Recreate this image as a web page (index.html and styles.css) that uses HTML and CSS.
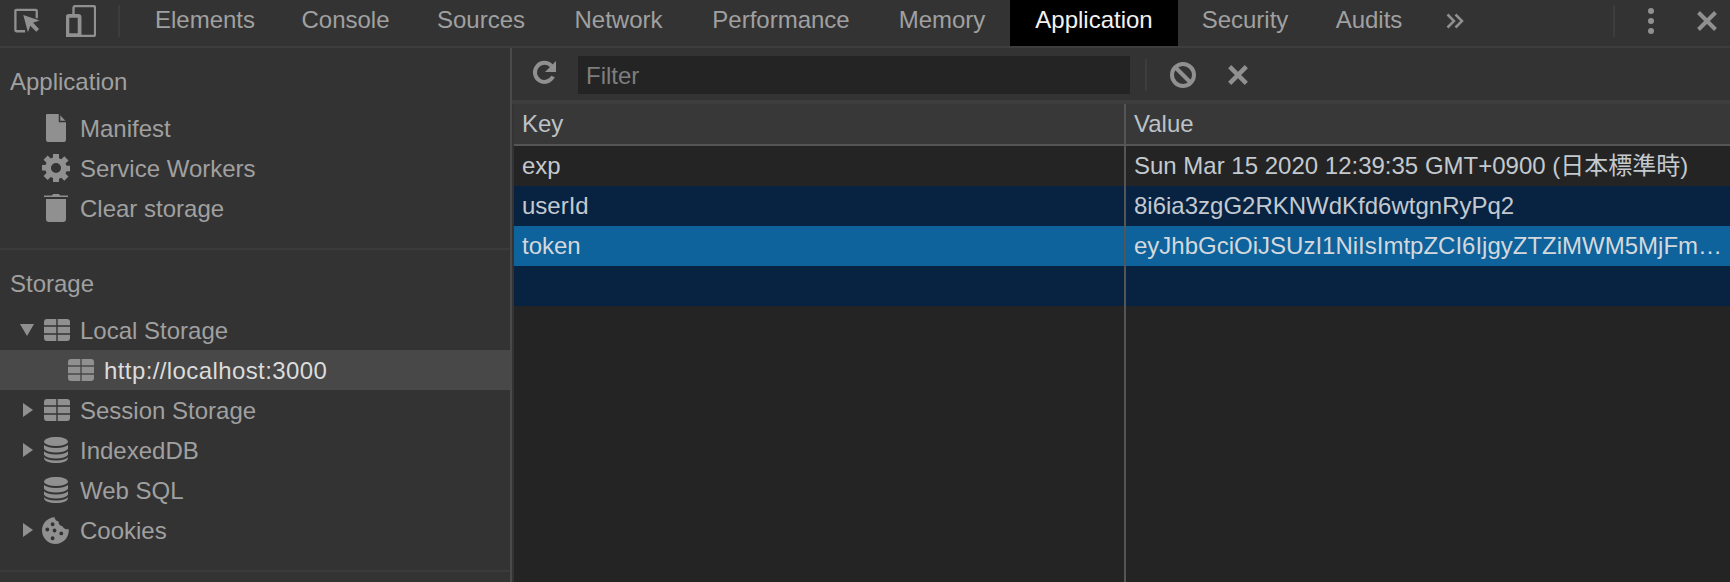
FILE: index.html
```html
<!DOCTYPE html>
<html lang="en">
<head>
<meta charset="utf-8">
<title>DevTools</title>
<link rel="stylesheet" href="styles.css">
</head>
<body>
<svg class="defs" width="0" height="0">
  <defs>
    <symbol id="grid" viewBox="0 0 26 22"><path d="M3 0h9.300v6.300H0V3a3 3 0 0 1 3-3zM13.700 0H23a3 3 0 0 1 3 3v3.300H13.700zM0 7.700h12.300v6.600H0zM13.700 7.700H26v6.600H13.700zM0 15.700h12.300V22H3a3 3 0 0 1-3-3zM13.700 15.700H26V19a3 3 0 0 1-3 3h-9.300z"/></symbol>
    <symbol id="db" viewBox="0 0 26 26"><path d="M1 5c0-3 5-5 12-5s12 2 12 5v16c0 3-5 5-12 5S1 24 1 21z"/><path class="cut" d="M0 5.500c2 3 6.500 4.500 13 4.500s11-1.500 13-4.500M0 12c2 3 6.500 4.500 13 4.500S24 15 26 12M0 18c2 3 6.500 4.500 13 4.500S24 21 26 18"/></symbol>
    <symbol id="right" viewBox="0 0 12 14"><path d="M1 0l10 7-10 7z"/></symbol>
  </defs>
</svg>
<div class="devtools">
  <header class="tabbar">
    <svg class="ic ic-inspect" viewBox="0 0 28 28"><path class="line" d="M12 25H2.500a1 1 0 0 1-1-1V3a1 1 0 0 1 1-1h21a1 1 0 0 1 1 1v8" /><path d="M10 7.500l17.500 6-7 2.500 6.500 6.500-3 3-6.500-6.500-2.500 7z"/></svg>
    <svg class="ic ic-device" viewBox="0 0 32 34"><path class="line" d="M8 11V3a2 2 0 0 1 2-2h19a2 2 0 0 1 2 2v28a2 2 0 0 1-2 2H14"/><path class="line thick" d="M3 11.500h10a1.500 1.500 0 0 1 1.500 1.500v19h-13V13A1.500 1.500 0 0 1 3 11.500z"/></svg>
    <span class="vsep"></span>
    <nav class="tabs">
      <a class="tab">Elements</a>
      <a class="tab">Console</a>
      <a class="tab">Sources</a>
      <a class="tab">Network</a>
      <a class="tab">Performance</a>
      <a class="tab">Memory</a>
      <a class="tab active">Application</a>
      <a class="tab">Security</a>
      <a class="tab">Audits</a>
    </nav>
    <svg class="ic ic-more" viewBox="0 0 18 16"><path class="line" d="M1.500 1.500L8 8l-6.500 6.500M9.500 1.500L16 8l-6.500 6.500"/></svg>
    <span class="vsep vsep-right"></span>
    <svg class="ic ic-dots" viewBox="0 0 6 26"><circle cx="3" cy="3" r="3"/><circle cx="3" cy="13" r="3"/><circle cx="3" cy="23" r="3"/></svg>
    <svg class="ic ic-close" viewBox="0 0 20 20"><path class="line thick" d="M1.500 1.500l17 17M18.500 1.500l-17 17"/></svg>
  </header>
  <div class="body">
    <aside class="sidebar">
      <section class="group group-app">
        <h2 class="heading">Application</h2>
        <ul class="tree">
          <li class="row"><span class="arrow"></span><svg class="ti ti-file" viewBox="0 0 20 28"><path d="M1 0h12l7 7.500V26a2 2 0 0 1-2 2H2a2 2 0 0 1-2-2V1a1 1 0 0 1 1-1z"/><path class="notch" d="M13.500 0v7.500H20"/></svg><span class="label">Manifest</span></li>
          <li class="row"><span class="arrow"></span><svg class="ti ti-gear" viewBox="0 0 28 28"><path fill-rule="evenodd" d="M11 0h6v4.200l2.300 1 3-3 4.200 4.200-3 3 1 2.300H28v5.600h-3.500l-1 2.300 3 3-4.200 4.200-3-3-2.300 1V28h-6v-3.900l-2.300-1-3 3-4.200-4.200 3-3-1-2.300H0v-5.600h3.500l1-2.300-3-3 4.200-4.200 3 3 2.300-1zM14 9a5 5 0 1 0 0 10 5 5 0 0 0 0-10z"/></svg><span class="label">Service Workers</span></li>
          <li class="row"><span class="arrow"></span><svg class="ti ti-trash" viewBox="0 0 24 28"><path d="M9 0h6l1 1.500h8V3H0V1.500h8zM2 5h20v20a3 3 0 0 1-3 3H5a3 3 0 0 1-3-3z"/></svg><span class="label">Clear storage</span></li>
        </ul>
      </section>
      <section class="group group-storage">
        <h2 class="heading">Storage</h2>
        <ul class="tree">
          <li class="row"><svg class="arrow arrow-down" viewBox="0 0 14 12"><path d="M0 0h14L7 12z"/></svg><svg class="ti ti-grid"><use href="#grid"/></svg><span class="label">Local Storage</span></li>
          <li class="row row-selected"><svg class="ti ti-grid"><use href="#grid"/></svg><span class="label">http://localhost:3000</span></li>
          <li class="row"><svg class="arrow"><use href="#right"/></svg><svg class="ti ti-grid"><use href="#grid"/></svg><span class="label">Session Storage</span></li>
          <li class="row"><svg class="arrow"><use href="#right"/></svg><svg class="ti ti-db"><use href="#db"/></svg><span class="label">IndexedDB</span></li>
          <li class="row"><span class="arrow"></span><svg class="ti ti-db"><use href="#db"/></svg><span class="label">Web SQL</span></li>
          <li class="row"><svg class="arrow"><use href="#right"/></svg><svg class="ti ti-cookie" viewBox="0 0 28 28"><path fill-rule="evenodd" d="M13 .2c.6 2.600 2 4 4 4.300.1 3 1.700 4.900 4.300 5 .6 2 2.700 3.400 6.500 3.300C28.200 21.500 22 28 14 28 6.300 28 0 21.700 0 14 0 6.500 5.700.5 13 .2zM11 5.500a2 2 0 1 0 0 4 2 2 0 0 0 0-4zM5.500 11a2 2 0 1 0 0 4 2 2 0 0 0 0-4zM13 12a2 2 0 1 0 0 4 2 2 0 0 0 0-4zM20 15a2 2 0 1 0 0 4 2 2 0 0 0 0-4zM11 20a2 2 0 1 0 0 4 2 2 0 0 0 0-4z"/></svg><span class="label">Cookies</span></li>
        </ul>
      </section>
    </aside>
    <main class="main">
      <div class="toolbar">
        <svg class="ic ic-refresh" viewBox="0 0 26 26"><path class="line thick" d="M21 16.500A9.500 9.500 0 1 1 19.500 6"/><path d="M24 1v11H13z"/></svg>
        <div class="filter">Filter</div>
        <span class="vsep vsep-tool"></span>
        <svg class="ic ic-block" viewBox="0 0 26 26"><circle class="line thick" cx="13" cy="13" r="11"/><path class="line thick" d="M5.500 5.500l15 15"/></svg>
        <svg class="ic ic-clear" viewBox="0 0 18 18"><path class="line thick" d="M1.500 1.500l15 15M16.500 1.500l-15 15"/></svg>
      </div>
      <div class="table">
        <div class="tr th"><div class="td key">Key</div><div class="td val">Value</div></div>
        <div class="tr"><div class="td key">exp</div><div class="td val">Sun Mar 15 2020 12:39:35 GMT+0900 (日本標準時)</div></div>
        <div class="tr navy"><div class="td key">userId</div><div class="td val">8i6ia3zgG2RKNWdKfd6wtgnRyPq2</div></div>
        <div class="tr blue"><div class="td key">token</div><div class="td val">eyJhbGciOiJSUzI1NiIsImtpZCI6IjgyZTZiMWM5MjFm…</div></div>
        <div class="tr navy"><div class="td key"></div><div class="td val"></div></div>
        <div class="tr filler"><div class="td key"></div><div class="td val"></div></div>
      </div>
    </main>
  </div>
</div>
</body>
</html>
```

FILE: styles.css
```css
* { box-sizing: border-box; }
html, body { margin: 0; height: 100%; overflow: hidden; background: #333; }
body { font-family: "Liberation Sans", "Noto Sans CJK JP", sans-serif; font-size: 24px; color: #a0a0a0; }
.defs { position: absolute; }
svg { fill: #909090; display: block; flex: none; }
.line { fill: none; stroke: #909090; stroke-width: 2.500; }
.thick { stroke-width: 4; }
.cut { fill: none; stroke: #333; stroke-width: 1.800; }

.devtools { display: flex; flex-direction: column; width: 1730px; height: 582px; }

.tabbar { display: flex; align-items: center; height: 48px; padding-bottom: 5px; flex: none; border-bottom: 2px solid #3d3d3d; }
.ic-inspect { width: 26px; height: 26px; margin-left: 14px; }
.ic-device { width: 30px; height: 32px; margin-left: 26px; }
.vsep { width: 2px; height: 32px; background: #3d3d3d; flex: none; }
.tabbar > .vsep { margin-left: 22px; }
.tabs { display: grid; grid-template-columns: 146px 135px 136px 139px 186px 136px 168px 134px 114px; align-self: flex-start; height: 46px; margin-left: 12px; }
.tab { display: flex; align-items: center; justify-content: center; padding-bottom: 7px; color: #a0a0a0; line-height: 1; }
.tab.active { background: #000; color: #f2f2f2; }
.ic-more { width: 18px; height: 16px; margin-left: 20px; }
.tabbar > .vsep-right { margin-left: 149px; }
.ic-dots { width: 6px; height: 26px; margin-left: 33px; }
.ic-close { width: 20px; height: 20px; margin-left: 43px; }

.body { display: flex; flex: 1; min-height: 0; }

.sidebar { width: 512px; flex: none; border-right: 2px solid #4a4a4a; }
.group-app { height: 202px; border-bottom: 2px solid #3b3b3b; }
.group-storage { height: 322px; border-bottom: 2px solid #3b3b3b; }
.heading { margin: 0; font: inherit; color: #a0a0a0; height: 60px; padding: 19px 0 0 10px; line-height: 30px; }
.tree { list-style: none; margin: 0; padding: 0; }
.row { display: flex; align-items: center; height: 40px; white-space: nowrap; }
.label { padding-top: 1px; }
.row-selected { background: #484848; color: #dcdcdc; padding-left: 68px; letter-spacing: .4px; }
.arrow { width: 12px; height: 14px; margin-left: 22px; flex: none; }
.arrow-down { width: 14px; height: 12px; margin-left: 20px; }
.ti { flex: none; }
.ti-file { width: 20px; height: 28px; margin: 0 14px 0 12px; }
.notch { fill: none; stroke: #333; stroke-width: 1.500; }
.ti-gear { width: 28px; height: 28px; margin: 0 10px 0 8px; }
.ti-trash { width: 24px; height: 28px; margin: 0 12px 0 10px; }
.ti-grid { width: 26px; height: 22px; margin: 0 10px 0 10px; }
.row-selected .ti-grid { margin-left: 0; }
.ti-db { width: 26px; height: 26px; margin: 0 11px 0 9px; }
.ti-cookie { width: 27px; height: 27px; margin: 0 11px 0 8px; }

.main { flex: 1; min-width: 0; display: flex; flex-direction: column; background: #242424; }
.toolbar { display: flex; align-items: center; height: 56px; padding-top: 2px; flex: none; background: #333; border-bottom: 4px solid #3d3d3d; }
.ic-refresh { width: 26px; height: 26px; margin: 0 0 4px 20px; }
.filter { width: 552px; height: 38px; margin-left: 20px; padding-left: 8px; background: #242424; color: #7e7e7e; line-height: 39px; }
.toolbar > .vsep-tool { margin-left: 15px; }
.ic-block { width: 26px; height: 26px; margin-left: 23px; }
.ic-clear { width: 20px; height: 20px; margin: 0 0 1px 32px; }

.table { flex: 1; display: flex; flex-direction: column; padding-left: 2px; background: #333; }
.tr { display: flex; height: 40px; flex: none; background: #242424; color: #c3c9cf; }
.th { height: 42px; background: #383838; border-bottom: 2px solid #555; color: #bcc2c8; }
.navy { background: #082342; }
.blue { background: #0e639c; color: #d4d8dc; }
.filler { flex: 1; }
.td { line-height: 40px; padding: 0 8px; white-space: nowrap; overflow: hidden; }
.key { width: 612px; flex: none; border-right: 2px solid #555; }
.val { flex: 1; min-width: 0; }
```
